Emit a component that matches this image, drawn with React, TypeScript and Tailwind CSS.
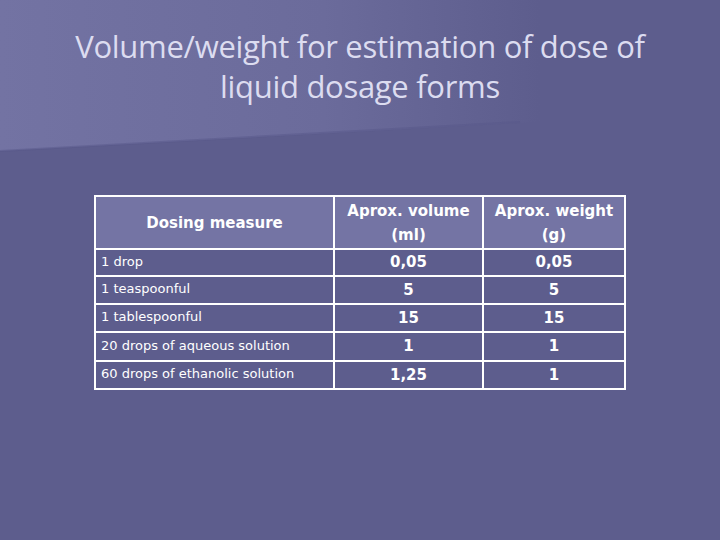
import React from "react";

const rows = [
  { measure: "1 drop", volume: "0,05", weight: "0,05", h: "h-[27px]" },
  { measure: "1 teaspoonful", volume: "5", weight: "5", h: "h-[28px]" },
  { measure: "1 tablespoonful", volume: "15", weight: "15", h: "h-[28px]" },
  { measure: "20 drops of aqueous solution", volume: "1", weight: "1", h: "h-[29px]" },
  { measure: "60 drops of ethanolic solution", volume: "1,25", weight: "1", h: "h-[28px]" },
];

function SlideBackground() {
  // the lighter wedge behind the title, fading to the right
  return (
    <svg className="absolute inset-0" width="720" height="540" viewBox="0 0 720 540">
      <defs>
        <linearGradient id="wedge" x1="0" y1="0" x2="1" y2="0">
          <stop offset="0" stopColor="#7373a3" />
          <stop offset="0.45" stopColor="#6b6b9b" />
          <stop offset="0.75" stopColor="#5d5d8d" />
        </linearGradient>
      </defs>
      <polygon points="0,0 720,0 720,112 0,151" fill="url(#wedge)" />
      <line x1="0" y1="151" x2="520" y2="122" stroke="#58588a" strokeWidth="2" strokeOpacity="0.5" />
    </svg>
  );
}

export default function App() {
  return (
    <div className="relative w-[720px] h-[540px] overflow-hidden bg-[#5d5d8d]">
      <SlideBackground />

      <div className="relative flex flex-col items-center pt-[26px]">
        <h1 className="text-center text-[31px] leading-[40px] text-[#dcdcf0] font-['Open_Sans',sans-serif] tracking-[-0.3px]">
          Volume/weight for estimation of dose of
          <br />
          liquid dosage forms
        </h1>

        <table className="mt-[89px] border-collapse border-2 border-white text-white font-['DejaVu_Sans',sans-serif]">
          <thead>
            <tr className="h-[53px] bg-[#7474a4]">
              <th className="w-[239px] border-2 border-white text-[15px] font-bold pt-[2px]">Dosing measure</th>
              <th className="w-[149px] border-2 border-white text-[15px] font-bold leading-[24px]">
                Aprox. volume
                <br />
                (ml)
              </th>
              <th className="w-[142px] border-2 border-white text-[15px] font-bold leading-[24px]">
                Aprox. weight
                <br />
                (g)
              </th>
            </tr>
          </thead>
          <tbody>
            {rows.map((r) => (
              <tr key={r.measure} className={`${r.h} bg-[#5d5d8d]`}>
                <td className="border-2 border-white pl-[5px] text-[13px] text-left pb-[2px]">{r.measure}</td>
                <td className="border-2 border-white text-center text-[15px] font-bold">{r.volume}</td>
                <td className="border-2 border-white text-center text-[15px] font-bold">{r.weight}</td>
              </tr>
            ))}
          </tbody>
        </table>
      </div>
    </div>
  );
}
